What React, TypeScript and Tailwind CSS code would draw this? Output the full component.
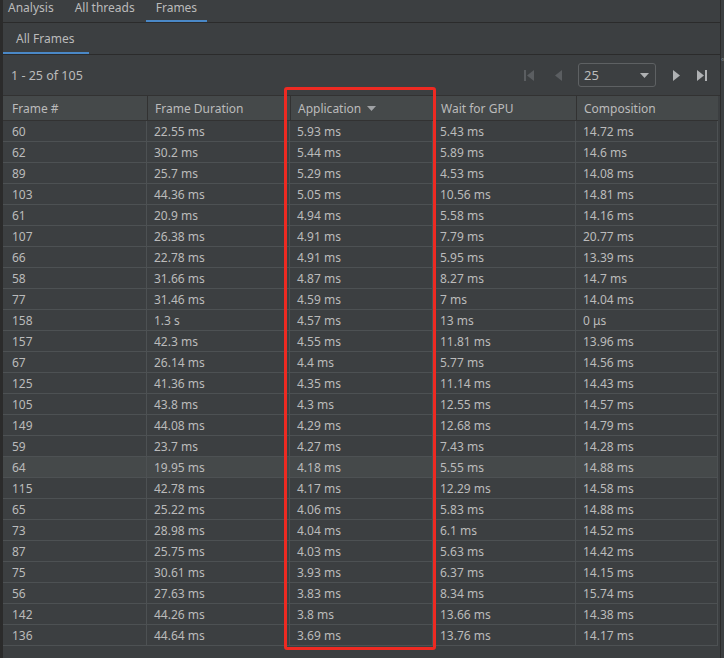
import React from "react";

const rows: string[][] = [
  ["60", "22.55 ms", "5.93 ms", "5.43 ms", "14.72 ms"],
  ["62", "30.2 ms", "5.44 ms", "5.89 ms", "14.6 ms"],
  ["89", "25.7 ms", "5.29 ms", "4.53 ms", "14.08 ms"],
  ["103", "44.36 ms", "5.05 ms", "10.56 ms", "14.81 ms"],
  ["61", "20.9 ms", "4.94 ms", "5.58 ms", "14.16 ms"],
  ["107", "26.38 ms", "4.91 ms", "7.79 ms", "20.77 ms"],
  ["66", "22.78 ms", "4.91 ms", "5.95 ms", "13.39 ms"],
  ["58", "31.66 ms", "4.87 ms", "8.27 ms", "14.7 ms"],
  ["77", "31.46 ms", "4.59 ms", "7 ms", "14.04 ms"],
  ["158", "1.3 s", "4.57 ms", "13 ms", "0 μs"],
  ["157", "42.3 ms", "4.55 ms", "11.81 ms", "13.96 ms"],
  ["67", "26.14 ms", "4.4 ms", "5.77 ms", "14.56 ms"],
  ["125", "41.36 ms", "4.35 ms", "11.14 ms", "14.43 ms"],
  ["105", "43.8 ms", "4.3 ms", "12.55 ms", "14.57 ms"],
  ["149", "44.08 ms", "4.29 ms", "12.68 ms", "14.79 ms"],
  ["59", "23.7 ms", "4.27 ms", "7.43 ms", "14.28 ms"],
  ["64", "19.95 ms", "4.18 ms", "5.55 ms", "14.88 ms"],
  ["115", "42.78 ms", "4.17 ms", "12.29 ms", "14.58 ms"],
  ["65", "25.22 ms", "4.06 ms", "5.83 ms", "14.88 ms"],
  ["73", "28.98 ms", "4.04 ms", "6.1 ms", "14.52 ms"],
  ["87", "25.75 ms", "4.03 ms", "5.63 ms", "14.42 ms"],
  ["75", "30.61 ms", "3.93 ms", "6.37 ms", "14.15 ms"],
  ["56", "27.63 ms", "3.83 ms", "8.34 ms", "15.74 ms"],
  ["142", "44.26 ms", "3.8 ms", "13.66 ms", "14.38 ms"],
  ["136", "44.64 ms", "3.69 ms", "13.76 ms", "14.17 ms"],
];

const headers = ["Frame #", "Frame Duration", "Application", "Wait for GPU", "Composition"];

const gridCols = "grid grid-cols-[144px_143px_143px_143px_142px]";

function FirstIcon({ color }: { color: string }) {
  return (
    <svg width="11" height="11" viewBox="0 0 11 11">
      <rect x="0" y="0" width="2" height="11" fill={color} />
      <polygon points="10,0 10,11 3,5.5" fill={color} />
    </svg>
  );
}
function PrevIcon({ color }: { color: string }) {
  return (
    <svg width="7" height="11" viewBox="0 0 7 11">
      <polygon points="7,0 7,11 0,5.5" fill={color} />
    </svg>
  );
}
function NextIcon({ color }: { color: string }) {
  return (
    <svg width="7" height="11" viewBox="0 0 7 11">
      <polygon points="0,0 0,11 7,5.5" fill={color} />
    </svg>
  );
}
function LastIcon({ color }: { color: string }) {
  return (
    <svg width="11" height="11" viewBox="0 0 11 11">
      <polygon points="0,0 0,11 7,5.5" fill={color} />
      <rect x="8" y="0" width="2" height="11" fill={color} />
    </svg>
  );
}

export default function App() {
  return (
    <div
      className="relative flex w-[724px] h-[658px] bg-[#3c3f41] text-[#bbbbbb] text-[12px] overflow-hidden"
      style={{ fontFamily: '"Noto Sans", "Liberation Sans", sans-serif' }}
    >
      <div className="w-[3px] bg-[#2b2b2b] shrink-0" />
      <div className="w-[717px] flex flex-col shrink-0">
        {/* top tabs */}
        <div className="h-[23px] flex border-b border-[#2b2b2b] leading-[14px]">
          <div className="ml-[5px] pt-[1px]">Analysis</div>
          <div className="ml-[21px] pt-[1px]">All threads</div>
          <div className="ml-[11px] px-[10px] pt-[1px] border-b-2 border-[#4a88c7] h-[22px]">Frames</div>
        </div>
        {/* sub tabs */}
        <div className="h-[32px] flex border-b border-[#2b2b2b]">
          <div className="w-[86px] h-[31px] border-b-2 border-[#4a88c7] flex items-center pl-[13px] pt-[3px]">
            All Frames
          </div>
        </div>
        {/* pagination */}
        <div className="h-[41px] flex items-center border-b border-[#323232]">
          <div className="ml-[8px] pt-[2px] text-[12.5px]">1 - 25 of 105</div>
          <div className="flex-1" />
          <div className="flex items-center">
            <FirstIcon color="#5b5e61" />
            <div className="ml-[20px]">
              <PrevIcon color="#5b5e61" />
            </div>
            <div className="ml-[16px] w-[78px] h-[24px] border border-[#5e6163] rounded-[3px] flex items-center pl-[5px] pr-[6px] text-[13px]">
              <span className="pt-[1px]">25</span>
              <span className="flex-1" />
              <svg width="9" height="5" viewBox="0 0 9 5">
                <polygon points="0,0 9,0 4.5,5" fill="#afb1b3" />
              </svg>
            </div>
            <div className="ml-[17px]">
              <NextIcon color="#afb1b3" />
            </div>
            <div className="ml-[17px] mr-[12px]">
              <LastIcon color="#afb1b3" />
            </div>
          </div>
        </div>
        {/* table */}
        <div className="w-[715px]">
          <div className={`${gridCols} h-[25px] bg-[#45494a] border-b border-[#323232]`}>
            {headers.map((h, i) => (
              <div
                key={h}
                className={`flex items-center pt-[1px] ${i === 0 ? "pl-[9px]" : "pl-[7px] border-l border-[#323232]"}`}
              >
                <span>{h}</span>
                {i === 2 && (
                  <svg className="ml-[6px]" width="9" height="5" viewBox="0 0 9 5">
                    <polygon points="0,0 9,0 4.5,5" fill="#9fa2a5" />
                  </svg>
                )}
              </div>
            ))}
          </div>
          {rows.map((r, ri) => (
            <div
              key={ri}
              className={`${gridCols} h-[21px] border-b border-[#4d5153] ${ri === 16 ? "bg-[#45494a]" : ""}`}
            >
              {r.map((c, ci) => (
                <div
                  key={ci}
                  className={`flex items-center pt-[1px] border-r border-[#4d5153] ${ci === 0 ? "pl-[9px]" : "pl-[7px]"}`}
                >
                  {c}
                </div>
              ))}
            </div>
          ))}
        </div>
      </div>
      <div className="w-[1px] bg-[#2b2b2b] shrink-0" />
      <div className="flex-1 relative">
        <span className="absolute left-0 top-[57px] text-[8px] leading-[10px] text-[#8a8d90]">°</span>
      </div>
      {/* red highlight box */}
      <div className="absolute left-[284px] top-[87px] w-[152px] h-[563px] border-[3px] border-[#ee2a22] rounded-[3px] pointer-events-none" />
    </div>
  );
}
